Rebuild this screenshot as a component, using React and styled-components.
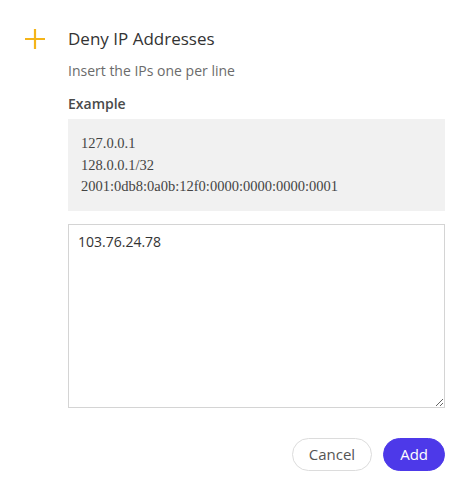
import React, {useState} from 'react';
import styled, {createGlobalStyle} from 'styled-components';

const GlobalStyle = createGlobalStyle`
    body {
        margin: 0;
        background: #fff;
        font-family: "Open Sans", "Noto Sans", sans-serif;
    }
`;

const PanelDIV = styled.div`
    width: 474px;
    height: 483px;
    box-sizing: border-box;
    padding: 27px 29px 0 24px;
    display: flex;
    gap: 22px;
`;

const IconSPAN = styled.span`
    width: 22px;
    height: 22px;
    margin-top: 1px;
    flex-shrink: 0;
    display: flex;
`;

const BodyDIV = styled.div`
    flex: 1;
    display: flex;
    flex-direction: column;
`;

const TitleH3 = styled.h3`
    margin: 0;
    font-size: 17px;
    font-weight: 400;
    color: #333;
    line-height: 24px;
`;

const HintP = styled.p`
    margin: 10px 0 0;
    font-size: 14px;
    color: #6b6b6b;
    line-height: 20px;
`;

const LabelH4 = styled.h4`
    margin: 13px 0 0;
    font-size: 14px;
    font-weight: 600;
    color: #4a4a4a;
    line-height: 20px;
`;

const ExampleDIV = styled.div`
    margin-top: 5px;
    background: #f1f1f1;
    padding: 14px 13px 13px;
    font-family: "Liberation Serif", "Times New Roman", serif;
    font-size: 14.5px;
    line-height: 21.5px;
    color: #444;
`;

const IpTEXTAREA = styled.textarea`
    margin-top: 13px;
    height: 184px;
    box-sizing: border-box;
    border: 1px solid #d4d4d4;
    padding: 7px 9px;
    font-family: "Open Sans", "Noto Sans", sans-serif;
    font-size: 14px;
    line-height: 20px;
    color: #333;
    resize: vertical;
    outline: none;
`;

const ActionsDIV = styled.div`
    margin-top: 30px;
    display: flex;
    justify-content: flex-end;
    gap: 11px;
`;

const PillBUTTON = styled.button`
    height: 33px;
    padding: 0 16px;
    border-radius: 17px;
    font-family: "Open Sans", "Noto Sans", sans-serif;
    font-size: 15px;
    cursor: pointer;
    border: 1px solid ${p => p.$primary ? '#4d39e9' : '#dcdcdc'};
    background: ${p => p.$primary ? '#4d39e9' : '#fff'};
    color: ${p => p.$primary ? '#fff' : '#555'};
`;

const PlusIcon = () => (
    <svg width="22" height="22" viewBox="0 0 22 22">
        <path d="M11 1v20M1 11h20" stroke="#f4b419" strokeWidth="2.2" fill="none"/>
    </svg>
);

const App = () => {
    const [ips, setIps] = useState('103.76.24.78');

    return (
        <>
            <GlobalStyle/>
            <PanelDIV>
                <IconSPAN><PlusIcon/></IconSPAN>
                <BodyDIV>
                    <TitleH3>Deny IP Addresses</TitleH3>
                    <HintP>Insert the IPs one per line</HintP>
                    <LabelH4>Example</LabelH4>
                    <ExampleDIV>
                        <div>127.0.0.1</div>
                        <div>128.0.0.1/32</div>
                        <div>2001:0db8:0a0b:12f0:0000:0000:0000:0001</div>
                    </ExampleDIV>
                    <IpTEXTAREA value={ips} onChange={e => setIps(e.target.value)}/>
                    <ActionsDIV>
                        <PillBUTTON>Cancel</PillBUTTON>
                        <PillBUTTON $primary>Add</PillBUTTON>
                    </ActionsDIV>
                </BodyDIV>
            </PanelDIV>
        </>
    );
}

export default App;
